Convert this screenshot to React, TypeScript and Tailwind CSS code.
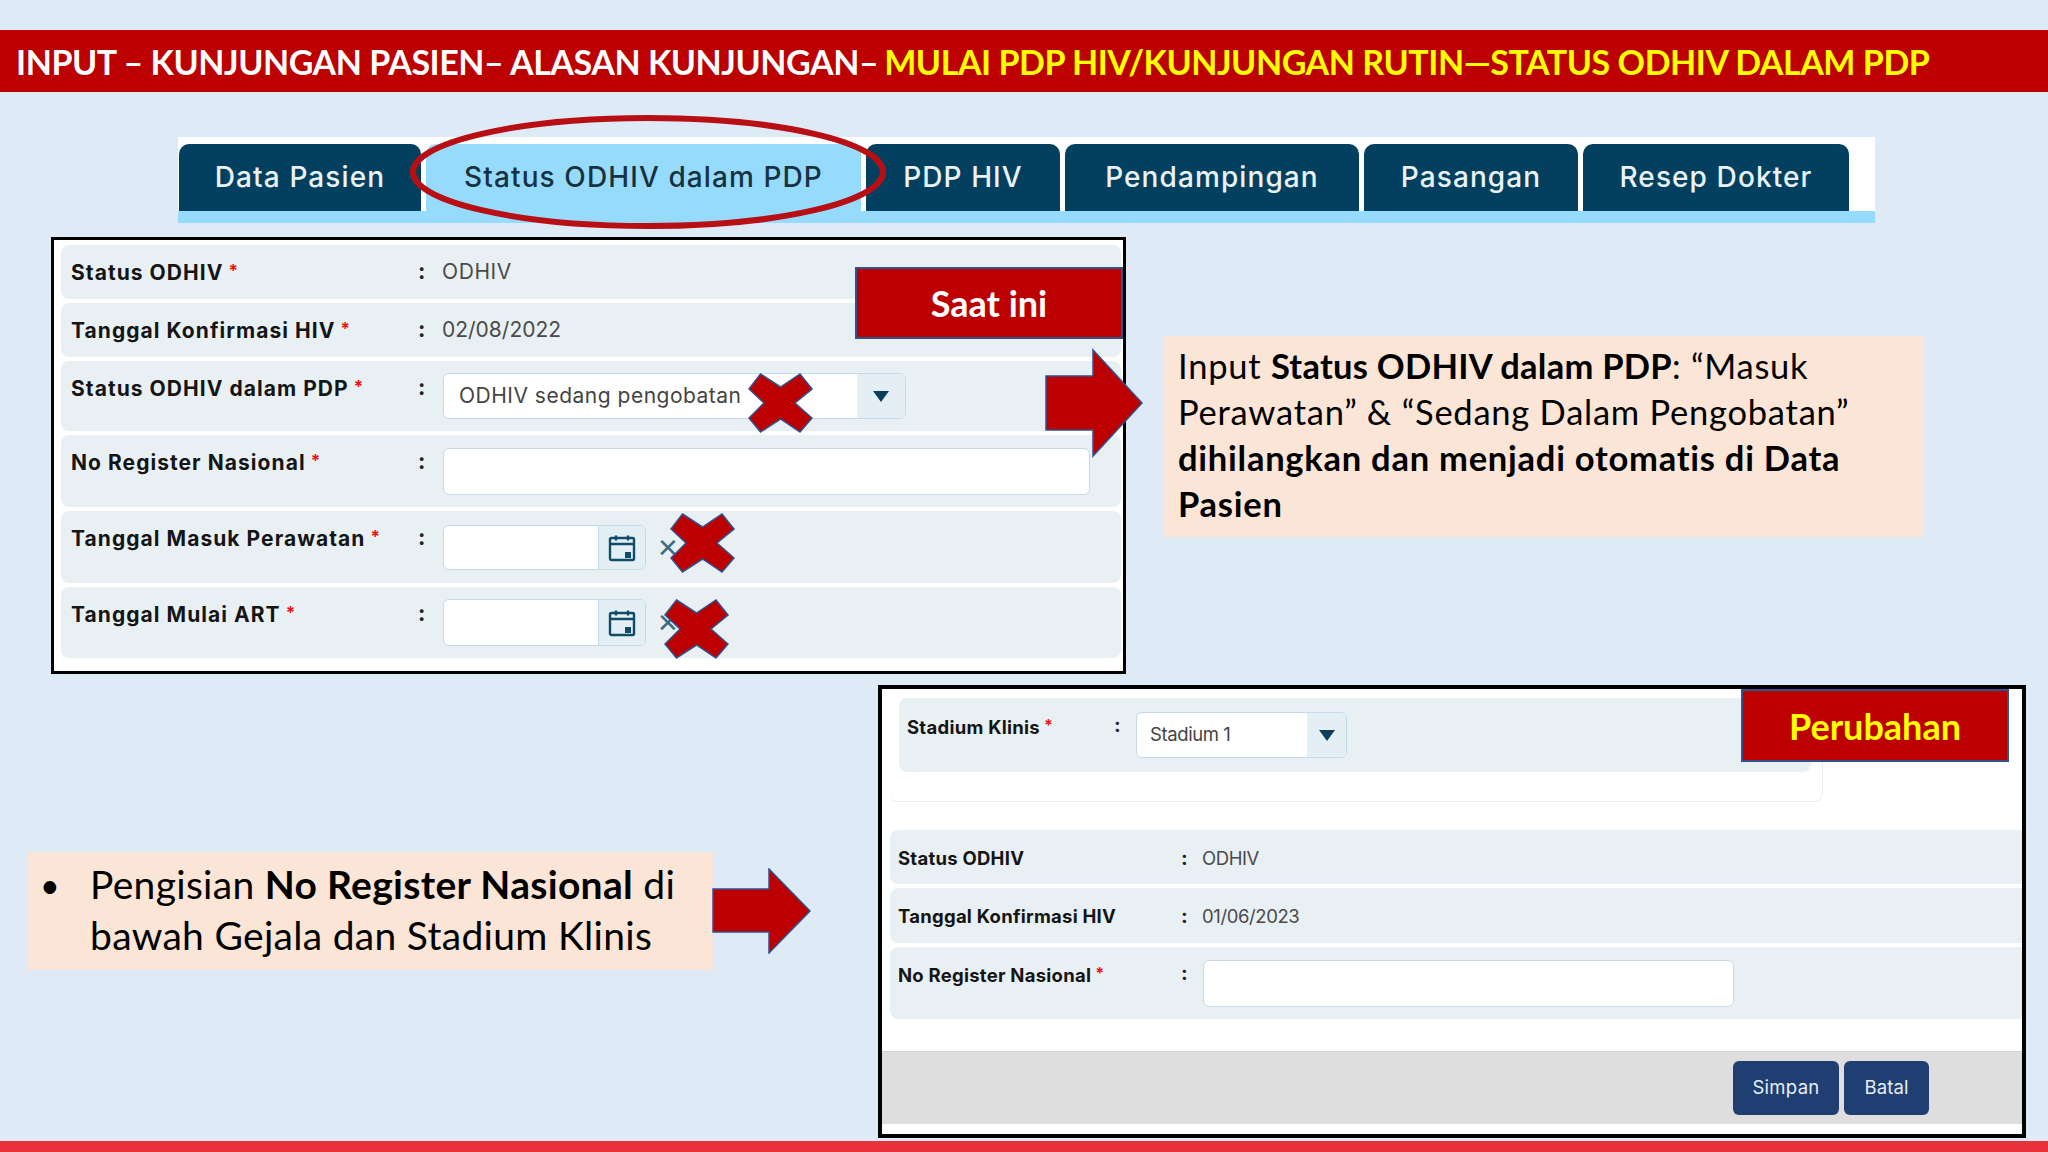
const calibri = "font-['Lato','Liberation_Sans',sans-serif]"
const webFont = "font-['Inter','Noto_Sans',sans-serif]"

const tabs = [
  { label: "Data Pasien", width: "w-[242px]" },
  { label: "Status ODHIV dalam PDP", width: "w-[435px]", active: true },
  { label: "PDP HIV", width: "w-[194px]" },
  { label: "Pendampingan", width: "w-[294px]" },
  { label: "Pasangan", width: "w-[214px]" },
  { label: "Resep Dokter", width: "w-[266px]" },
]

function RedArrow({ className, viewBox, points }: { className: string; viewBox: string; points: string }) {
  return (
    <svg className={className} viewBox={viewBox}>
      <polygon points={points} fill="#BC0000" stroke="#2F528F" strokeWidth="1.5" />
    </svg>
  )
}

function RedCross({ className }: { className: string }) {
  return (
    <svg className={className} viewBox="0 0 65 60">
      <polygon
        points="12.5,1 32.5,14 52,1 64,16 47,30 64,45 52,59 32.5,46 12.5,59 1,45 16,30 1,16"
        fill="#BC0000"
        stroke="#2F528F"
        strokeWidth="1.5"
      />
    </svg>
  )
}

function CalendarIcon() {
  return (
    <svg className="h-[28px] w-[28px]" viewBox="0 0 28 28" fill="none" stroke="#0F4C68" strokeWidth="2.4">
      <rect x="2" y="4" width="24" height="22" rx="1.5" />
      <path d="M2 10h24M8 1.5v5M20 1.5v5" />
      <rect x="17" y="18" width="6" height="6" fill="#0F4C68" stroke="none" />
    </svg>
  )
}

function Triangle() {
  return (
    <svg className="h-[11px] w-[16px]" viewBox="0 0 16 11">
      <polygon points="0,0 16,0 8,11" fill="#0D3F5C" />
    </svg>
  )
}

function Star({ className = "" }: { className?: string }) {
  return <span className={`text-[#F01010] ${className}`}> *</span>
}

function Select({ value, className, textClass, arrowWidth }: { value: string; className: string; textClass: string; arrowWidth: string }) {
  return (
    <div className={`flex overflow-hidden rounded-[6px] border border-[#C3DBE8] bg-white ${className}`}>
      <div className={`flex flex-1 items-center text-[#444] ${textClass}`}>{value}</div>
      <div className={`flex items-center justify-center bg-[#E4EFF5] ${arrowWidth}`}>
        <Triangle />
      </div>
    </div>
  )
}

function DateInput({ className }: { className: string }) {
  return (
    <div className={`ml-[1px] flex items-center ${className}`}>
      <div className="flex h-full w-[203px] overflow-hidden rounded-[6px] border border-[#C3DBE8] bg-white">
        <div className="flex-1" />
        <div className="flex w-[47px] items-center justify-center border-l border-[#C3DBE8] bg-[#E4EFF5]">
          <CalendarIcon />
        </div>
      </div>
      <span className="ml-[11px] text-[26px] leading-none text-[#3E6B80]">✕</span>
    </div>
  )
}

function CurrentRow({ label, star, height, children }: { label: string; star?: boolean; height: string; children: React.ReactNode }) {
  return (
    <div className={`flex rounded-[8px] bg-[#E9F0F4] pl-[10px] ${height}`}>
      <div className="mt-[12px] w-[347px] text-[21px] leading-[28px] font-bold tracking-[1.05px] text-[#151515]">
        {label}
        {star && <Star className="align-[3px] text-[17px]" />}
      </div>
      <div className="mt-[12px] w-[24px] text-[22px] leading-[28px] font-bold text-[#222]">:</div>
      {children}
    </div>
  )
}

function NewRow({ label, star, height, labelTop, children }: { label: string; star?: boolean; height: string; labelTop: string; children: React.ReactNode }) {
  return (
    <div className={`flex rounded-l-[8px] bg-[#E9F0F4] pl-[8px] ${height}`}>
      <div className={`w-[283px] text-[18.5px] leading-[26px] font-bold tracking-[0.25px] text-[#151515] ${labelTop}`}>
        {label}
        {star && <Star className="align-[3px] text-[16px]" />}
      </div>
      <div className={`w-[21px] text-[20px] leading-[26px] font-bold text-[#222] ${labelTop}`}>:</div>
      {children}
    </div>
  )
}

function CurrentPanel() {
  const value = "pt-[13px] text-[21px] leading-[28px] text-[#4A4A4A]"
  return (
    <div className={`relative h-[437px] w-[1075px] shrink-0 border-[3px] border-black bg-white pt-[5px] pl-[7px] pr-[2px] ${webFont}`}>
      <div className="flex flex-col gap-[4px]">
        <CurrentRow label="Status ODHIV" star height="h-[54px]">
          <div className={`${value} tracking-[0.6px]`}>ODHIV</div>
        </CurrentRow>
        <CurrentRow label="Tanggal Konfirmasi HIV" star height="h-[54px]">
          <div className={value}>02/08/2022</div>
        </CurrentRow>
        <CurrentRow label="Status ODHIV dalam PDP" star height="h-[70px]">
          <Select
            value="ODHIV sedang pengobatan"
            className="mt-[12px] ml-[1px] h-[46px] w-[463px]"
            textClass="pl-[15px] text-[21px] tracking-[0.5px]"
            arrowWidth="w-[48px]"
          />
        </CurrentRow>
        <CurrentRow label="No Register Nasional" star height="h-[72px]">
          <div className="mt-[13px] ml-[1px] h-[47px] w-[647px] rounded-[6px] border border-[#C3DBE8] bg-white" />
        </CurrentRow>
        <CurrentRow label="Tanggal Masuk Perawatan" star height="h-[72px]">
          <DateInput className="mt-[14px] h-[45px]" />
        </CurrentRow>
        <CurrentRow label="Tanggal Mulai ART" star height="h-[71px]">
          <DateInput className="mt-[12px] h-[47px]" />
        </CurrentRow>
      </div>

      <div className={`absolute top-[27px] left-[801px] flex h-[72px] w-[268px] items-center justify-center border-2 border-[#2F528F] bg-[#BC0000] text-[36px] font-bold text-white ${calibri}`}>
        Saat ini
      </div>
      <RedArrow
        className="absolute top-[108px] left-[991px] h-[110px] w-[98px]"
        viewBox="0 0 98 110"
        points="1,28 48,28 48,2 97,55 48,108 48,82 1,82"
      />
      <RedCross className="absolute top-[133px] left-[694px] h-[60px] w-[65px]" />
      <RedCross className="absolute top-[273px] left-[616px] h-[60px] w-[65px]" />
      <RedCross className="absolute top-[359px] left-[610px] h-[60px] w-[65px]" />
    </div>
  )
}

function NewPanel() {
  const value = "pt-[15px] text-[18.5px] leading-[26px] tracking-[-0.4px] text-[#4A4A4A]"
  return (
    <div className={`relative ml-[165px] h-[453px] w-[1148px] shrink-0 border-4 border-black bg-white ${webFont}`}>
      <div className="ml-[8px] h-[113px] w-[933px] rounded-b-[8px] border-b border-r border-[#ECEFF1] pt-[9px] pl-[9px]">
        <div className="flex h-[74px] w-[912px] rounded-[8px] bg-[#E9F0F4] pl-[8px]">
          <div className="mt-[14px] w-[207px] text-[18.5px] leading-[26px] font-bold tracking-[0.25px] text-[#151515]">
            Stadium Klinis
            <Star className="align-[3px] text-[16px]" />
          </div>
          <div className="mt-[14px] w-[22px] text-[20px] leading-[26px] font-bold text-[#222]">:</div>
          <Select
            value="Stadium 1"
            className="mt-[14px] h-[46px] w-[211px]"
            textClass="pl-[13px] text-[18.5px] tracking-[-0.4px]"
            arrowWidth="w-[39px]"
          />
        </div>
      </div>

      <div className="mt-[28px] ml-[8px] flex flex-col gap-[4px]">
        <NewRow label="Status ODHIV" height="h-[54px]" labelTop="mt-[15px]">
          <div className={value}>ODHIV</div>
        </NewRow>
        <NewRow label="Tanggal Konfirmasi HIV" height="h-[55px]" labelTop="mt-[15px]">
          <div className={value}>01/06/2023</div>
        </NewRow>
        <NewRow label="No Register Nasional" star height="h-[72px]" labelTop="mt-[13px]">
          <div className="mt-[13px] ml-[1px] h-[47px] w-[531px] rounded-[6px] border border-[#C3DBE8] bg-white" />
        </NewRow>
      </div>

      <div className="mt-[32px] flex h-[73px] items-center justify-end gap-[5px] border-t border-[#D2D2D2] bg-[#DEDEDE] pr-[93px]">
        <button className="h-[54px] w-[106px] rounded-[6px] bg-[#1F3F73] text-[18.5px] tracking-[0.3px] text-[#E8EEF5]">Simpan</button>
        <button className="h-[54px] w-[85px] rounded-[6px] bg-[#1F3F73] text-[18.5px] tracking-[0.1px] text-[#E8EEF5]">Batal</button>
      </div>

      <div className={`absolute top-0 left-[859px] flex h-[73px] w-[268px] items-center justify-center border-2 border-[#2F528F] bg-[#BC0000] text-[36px] font-bold text-[#FFFF00] ${calibri}`}>
        Perubahan
      </div>
    </div>
  )
}

export default function App() {
  return (
    <div className={`h-[1152px] w-[2048px] overflow-hidden bg-[#DEEAF6] pt-[30px] ${calibri}`}>
      <div className="flex h-[62px] items-center whitespace-nowrap bg-[#BC0000] pl-[16px] text-[34px] font-bold tracking-[-0.45px] text-white">
        INPUT – KUNJUNGAN PASIEN– ALASAN KUNJUNGAN–
        <span className="ml-[6px] text-[#FFFF00]">MULAI PDP HIV/KUNJUNGAN RUTIN—STATUS ODHIV DALAM PDP</span>
      </div>

      <div className={`relative mt-[45px] ml-[178px] w-[1697px] bg-white pt-[7px] ${webFont}`}>
        <div className="flex h-[67px] gap-[5px] pl-[1px]">
          {tabs.map((tab) => (
            <div
              key={tab.label}
              className={`flex items-center justify-center rounded-t-[10px] pb-[2px] text-[28px] font-medium tracking-[1.1px] ${tab.width} ${
                tab.active ? "bg-[#97DBFC] text-[#17323F]" : "bg-[#034060] text-[#EAF2F6]"
              }`}
            >
              {tab.label}
            </div>
          ))}
        </div>
        <div className="h-[12px] bg-[#97DBFC]" />
        <svg className="absolute top-[-22px] left-[232px] h-[114px] w-[476px]" viewBox="0 0 476 114" fill="none">
          <ellipse cx="238" cy="57" rx="235" ry="54" stroke="#B80F14" strokeWidth="6" />
        </svg>
      </div>

      <div className="mt-[14px] ml-[51px] flex">
        <CurrentPanel />
        <div className="mt-[99px] ml-[37px] h-[201px] w-[761px] bg-[#FBE5D6] pt-[7px] pl-[15px] text-[34.5px] leading-[46px] tracking-[0.75px] text-black">
          Input <b className="tracking-[0.25px]">Status ODHIV dalam PDP</b>: “Masuk
          <br />
          Perawatan” &amp; “Sedang Dalam Pengobatan”
          <br />
          <b>dihilangkan dan menjadi otomatis di Data</b>
          <br />
          <b>Pasien</b>
        </div>
      </div>

      <div className="mt-[11px] flex">
        <div className="relative mt-[167px] ml-[28px] flex h-[118px] w-[685px] shrink-0 bg-[#FBE5D6] pt-[7px] text-[39px] leading-[51px] tracking-[0.3px] text-black">
          <div className="w-[62px] pl-[12px] text-[34px]">•</div>
          <div>
            Pengisian <b>No Register Nasional</b> di
            <br />
            bawah Gejala dan Stadium Klinis
          </div>
          <RedArrow
            className="absolute top-[16px] left-[684px] h-[86px] w-[99px]"
            viewBox="0 0 99 86"
            points="1,21 57,21 57,1 98,43 57,85 57,64 1,64"
          />
        </div>
        <NewPanel />
      </div>

      <div className="mt-[3px] h-[11px] bg-[#E7323A]" />
    </div>
  )
}
